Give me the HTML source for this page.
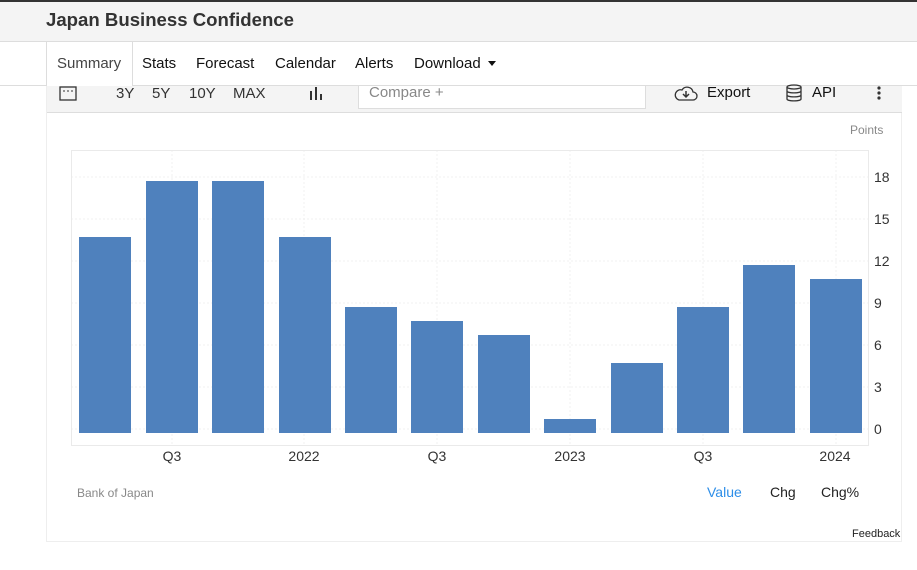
<!DOCTYPE html>
<html><head><meta charset="utf-8"><style>
*{margin:0;padding:0;box-sizing:border-box}
body{width:917px;height:570px;background:#fff;font-family:"Liberation Sans",Arial,sans-serif;position:relative;overflow:hidden;color:#222}
.a{position:absolute;white-space:nowrap}
</style></head><body>
<div class="a" style="left:0;top:0;width:917px;height:2px;background:#333"></div>
<div class="a" style="left:0;top:2px;width:917px;height:40px;background:#f4f4f4;border-bottom:1px solid #ddd"></div>
<div class="a" style="left:46px;top:9px;font-size:18.6px;font-weight:bold;color:#333">Japan Business Confidence</div>
<div class="a" style="left:0;top:85px;width:917px;height:1px;background:#ddd"></div>
<div class="a" style="left:46px;top:42px;width:87px;height:44px;background:#fff;border-left:1px solid #ddd;border-right:1px solid #ddd"></div>
<div class="a" style="left:57px;top:55px;font-size:15px;color:#444">Summary</div>
<div class="a" style="left:142px;top:55px;font-size:15px;color:#111">Stats</div>
<div class="a" style="left:196px;top:55px;font-size:15px;color:#111">Forecast</div>
<div class="a" style="left:275px;top:55px;font-size:15px;color:#111">Calendar</div>
<div class="a" style="left:355px;top:55px;font-size:15px;color:#111">Alerts</div>
<div class="a" style="left:414px;top:55px;font-size:15px;color:#111">Download</div>
<div class="a" style="left:488px;top:61px;border-left:4px solid transparent;border-right:4px solid transparent;border-top:5px solid #111"></div>
<div class="a" style="left:46px;top:86px;width:856px;height:456px;border:1px solid #eee;border-top:none"></div>
<div class="a" style="left:47px;top:86px;width:855px;height:27px;background:#f4f4f4;border-bottom:1px solid #ddd"></div>
<svg class="a" style="left:59px;top:85px" width="20" height="18"><rect x="1" y="2" width="16" height="13" fill="none" stroke="#333" stroke-width="1.3"/><path d="M4 6h2M8 6h2M12 6h2" stroke="#333"/></svg>
<div class="a" style="left:116px;top:85px;font-size:15px;color:#333">3Y</div>
<div class="a" style="left:152px;top:85px;font-size:15px;color:#333">5Y</div>
<div class="a" style="left:189px;top:85px;font-size:15px;color:#333">10Y</div>
<div class="a" style="left:233px;top:85px;font-size:15px;color:#333">MAX</div>
<svg class="a" style="left:309px;top:85px" width="16" height="16"><path d="M2 6v9M7 2v13M12 9v6" stroke="#333" stroke-width="2"/></svg>
<div class="a" style="left:358px;top:86px;width:288px;height:23px;background:#fff;border:1px solid #ddd;border-top:none"></div>
<div class="a" style="left:369px;top:84px;font-size:15px;color:#888">Compare +</div>
<svg class="a" style="left:673px;top:84px" width="26" height="18"><path d="M6 16h14a4 4 0 0 0 0-8 6 6 0 0 0-11-2 5 5 0 0 0-3 10z" fill="none" stroke="#333" stroke-width="1.3"/><path d="M13 7v6M10 10l3 3 3-3" stroke="#333" stroke-width="1.5" fill="none"/></svg>
<div class="a" style="left:707px;top:84px;font-size:15px;color:#111">Export</div>
<svg class="a" style="left:785px;top:84px" width="18" height="18"><ellipse cx="9" cy="3" rx="7" ry="2" fill="none" stroke="#333" stroke-width="1.3"/><path d="M2 3v12c0 2.5 14 2.5 14 0V3M2 7c0 2.5 14 2.5 14 0M2 11c0 2.5 14 2.5 14 0" fill="none" stroke="#333" stroke-width="1.3"/></svg>
<div class="a" style="left:812px;top:84px;font-size:15px;color:#111">API</div>
<svg class="a" style="left:876px;top:85px" width="6" height="16"><circle cx="3" cy="3" r="1.6" fill="#333"/><circle cx="3" cy="8" r="1.6" fill="#333"/><circle cx="3" cy="13" r="1.6" fill="#333"/></svg>
<div class="a" style="left:850px;top:123px;font-size:12px;color:#888">Points</div>
<svg class="a" style="left:0;top:0" width="917" height="570" font-family="Liberation Sans, Arial, sans-serif">
<g stroke="#f0f0f0" stroke-width="1" stroke-dasharray="2,2">
<path d="M71 177H868M71 219H868M71 261H868M71 303H868M71 345H868M71 387H868M71 429H868"/>
<path d="M172 150V446M304 150V446M437 150V446M570 150V446M703 150V446M836 150V446"/>
</g>
<rect x="71.5" y="150.5" width="797" height="295" fill="none" stroke="#eaeaea"/>
<g fill="#4f81bd">
<rect x="79" y="237" width="52" height="196"/><rect x="146" y="181" width="52" height="252"/><rect x="212" y="181" width="52" height="252"/><rect x="279" y="237" width="52" height="196"/><rect x="345" y="307" width="52" height="126"/><rect x="411" y="321" width="52" height="112"/><rect x="478" y="335" width="52" height="98"/><rect x="544" y="419" width="52" height="14"/><rect x="611" y="363" width="52" height="70"/><rect x="677" y="307" width="52" height="126"/><rect x="743" y="265" width="52" height="168"/><rect x="810" y="279" width="52" height="154"/>
</g>
<g font-size="14" fill="#333">
<text x="874" y="182">18</text><text x="874" y="224">15</text><text x="874" y="266">12</text><text x="874" y="308">9</text><text x="874" y="350">6</text><text x="874" y="392">3</text><text x="874" y="434">0</text>
</g>
<g font-size="14" fill="#333" text-anchor="middle">
<text x="172" y="461">Q3</text><text x="304" y="461">2022</text><text x="437" y="461">Q3</text><text x="570" y="461">2023</text><text x="703" y="461">Q3</text><text x="835" y="461">2024</text>
</g>
</svg>
<div class="a" style="left:77px;top:486px;font-size:12px;color:#888">Bank of Japan</div>
<div class="a" style="left:707px;top:484px;font-size:14px;color:#2d8ee8">Value</div>
<div class="a" style="left:770px;top:484px;font-size:14px;color:#222">Chg</div>
<div class="a" style="left:821px;top:484px;font-size:14px;color:#222">Chg%</div>
<div class="a" style="left:852px;top:528px;font-size:11px;color:#222">Feedback</div>
</body></html>
